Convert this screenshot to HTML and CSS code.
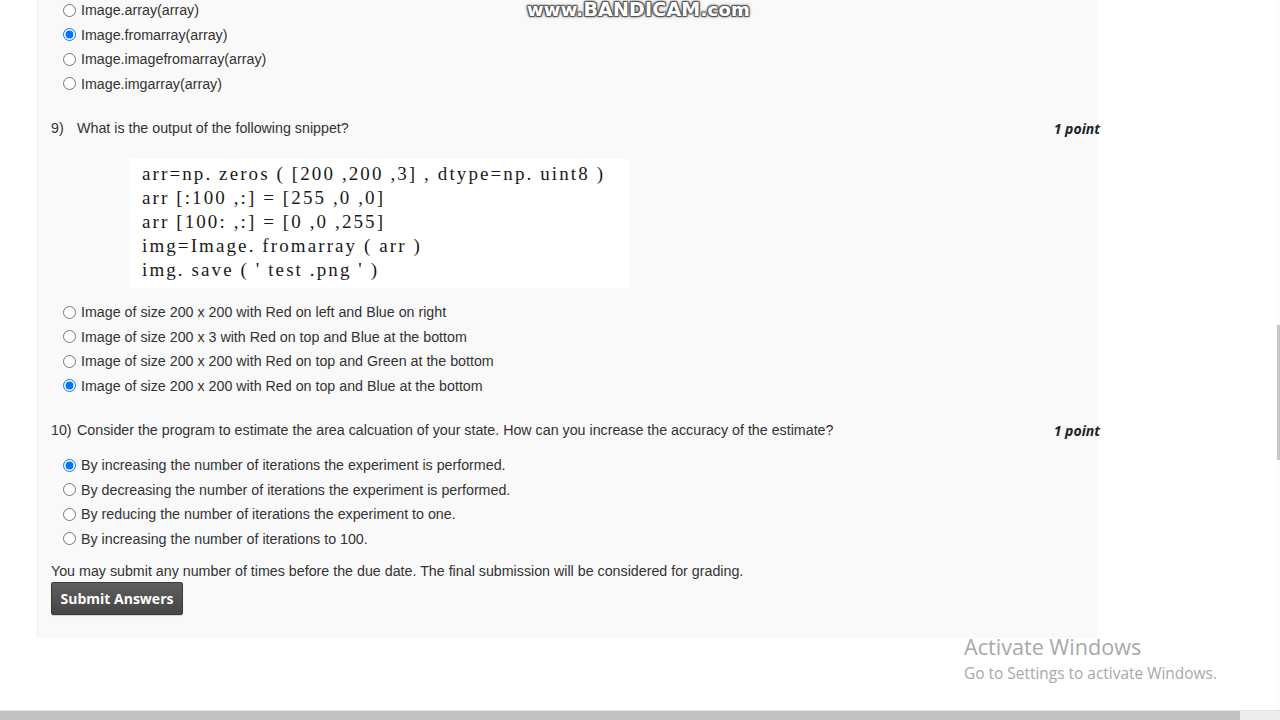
FILE: index.html
```html
<!DOCTYPE html>
<html>
<head>
<meta charset="utf-8">
<link rel="stylesheet" href="styles.css">
</head>
<body>
<div class="page">
  <div class="panel">
    <div class="opts first">
      <label class="opt"><input type="radio" name="q8"><span>Image.array(array)</span></label>
      <label class="opt"><input type="radio" name="q8" checked><span>Image.fromarray(array)</span></label>
      <label class="opt"><input type="radio" name="q8"><span>Image.imagefromarray(array)</span></label>
      <label class="opt"><input type="radio" name="q8"><span>Image.imgarray(array)</span></label>
    </div>

    <div class="q">
      <div class="qtext"><span class="qnum">9)</span><span>What is the output of the following snippet?</span></div>
      <div class="pts">1 point</div>
    </div>
    <div class="code">
      <div class="cl">arr=np. zeros ( [200 ,200 ,3] , dtype=np. uint8 )</div>
      <div class="cl">arr [:100 ,:] = [255 ,0 ,0]</div>
      <div class="cl">arr [100: ,:] = [0 ,0 ,255]</div>
      <div class="cl">img=Image. fromarray ( arr )</div>
      <div class="cl">img. save ( ' test .png ' )</div>
    </div>
    <div class="opts after-code">
      <label class="opt"><input type="radio" name="q9"><span>Image of size 200 x 200 with Red on left and Blue on right</span></label>
      <label class="opt"><input type="radio" name="q9"><span>Image of size 200 x 3 with Red on top and Blue at the bottom</span></label>
      <label class="opt"><input type="radio" name="q9"><span>Image of size 200 x 200 with Red on top and Green at the bottom</span></label>
      <label class="opt"><input type="radio" name="q9" checked><span>Image of size 200 x 200 with Red on top and Blue at the bottom</span></label>
    </div>

    <div class="q">
      <div class="qtext"><span class="qnum">10)</span><span>Consider the program to estimate the area calcuation of your state. How can you increase the accuracy of the estimate?</span></div>
      <div class="pts">1 point</div>
    </div>
    <div class="opts after-q">
      <label class="opt"><input type="radio" name="q10" checked><span>By increasing the number of iterations the experiment is performed.</span></label>
      <label class="opt"><input type="radio" name="q10"><span>By decreasing the number of iterations the experiment is performed.</span></label>
      <label class="opt"><input type="radio" name="q10"><span>By reducing the number of iterations the experiment to one.</span></label>
      <label class="opt"><input type="radio" name="q10"><span>By increasing the number of iterations to 100.</span></label>
    </div>

    <p class="note">You may submit any number of times before the due date. The final submission will be considered for grading.</p>
    <button class="submit" type="button">Submit Answers</button>
  </div>
</div>

<div class="bandicam"><span class="lc">www.</span>BANDICAM<span class="lc">.com</span></div>

<div class="activate">
  <div class="a1">Activate Windows</div>
  <div class="a2">Go to Settings to activate Windows.</div>
</div>

<div class="vscroll"><div class="vthumb"></div></div>
<div class="hscroll"><div class="hthumb"></div></div>
</body>
</html>
```

FILE: styles.css
```css
html, body {
  margin: 0;
  padding: 0;
  background: #ffffff;
  overflow: hidden;
  width: 1280px;
  height: 720px;
}

body {
  font-family: "Liberation Sans", Arial, sans-serif;
  font-size: 14.25px;
  color: #333333;
}

.page {
  padding-left: 37px;
}

.panel {
  width: 1046px;
  background: #f9f9f9;
  padding: 0 0 23px 13px;
  border-left: 1px solid #f1f1f1;
}

.opts {
  display: flex;
  flex-direction: column;
}

.opts.first { margin-top: -2px; }
.opts.after-code { margin-top: 12px; }
.opts.after-q { margin-top: 13px; }

.opt {
  height: 24.5px;
  display: flex;
  align-items: center;
  padding-left: 12px;
  white-space: nowrap;
}

.opt input {
  width: 13px;
  height: 13px;
  margin: 0 5px 0 0;
  accent-color: #0075ff;
}

.q {
  margin-top: 22px;
  height: 20px;
  display: flex;
  align-items: center;
  justify-content: space-between;
  margin-right: -3px;
}

.qtext {
  display: flex;
  white-space: nowrap;
}

.qnum {
  width: 26px;
}

.pts {
  font-family: "Open Sans", "Liberation Sans", sans-serif;
  font-weight: 700;
  font-style: italic;
  font-size: 14px;
  color: #222;
}

.code {
  margin: 21px 0 0 78px;
  width: 487px;
  height: 120px;
  padding: 3px 0 6px 13px;
  background: #ffffff;
  font-family: "Liberation Serif", "Times New Roman", serif;
  font-size: 19px;
  line-height: 24px;
  color: #1a1a1a;
}

.cl {
  white-space: pre;
  letter-spacing: 2.1px;
  height: 24px;
}

.note {
  margin: 10px 0 0 0;
  line-height: 20px;
}

.submit {
  display: block;
  margin-top: 1px;
  width: 132px;
  height: 33px;
  border: 1px solid #3c3c3c;
  border-radius: 2px;
  background: linear-gradient(#5e5e5e, #464646);
  color: #ffffff;
  font-family: "Open Sans", "Liberation Sans", sans-serif;
  font-weight: 700;
  font-size: 14px;
  padding: 0;
  box-shadow: 0 1px 1px rgba(0,0,0,0.15);
}

.bandicam {
  position: absolute;
  left: 527px;
  top: -2px;
  font-family: "DejaVu Sans", sans-serif;
  font-weight: 700;
  font-size: 19px;
  letter-spacing: 0.2px;
  color: #ffffff;
  text-shadow: 0 0 2px #555, 1px 1px 1px #555, -1px -1px 1px #555, 1px -1px 1px #555, -1px 1px 1px #555, 0 0 4px #888;
}

.bandicam .lc {
  font-size: 18px;
}

.activate {
  position: absolute;
  left: 964px;
  top: 633px;
  font-family: "Open Sans", "Noto Sans", sans-serif;
  color: #a8a8a8;
}

.a1 {
  font-size: 21.6px;
  line-height: 28px;
}

.a2 {
  font-size: 15.45px;
  line-height: 24px;
}

.vscroll {
  position: absolute;
  right: 0;
  top: 0;
  width: 4px;
  height: 711px;
  background: #fcfcfc;
}

.vthumb {
  position: absolute;
  left: 1px;
  top: 325px;
  width: 3px;
  height: 135px;
  background: #c6c6c6;
}

.hscroll {
  position: absolute;
  left: 0;
  bottom: 0;
  width: 1280px;
  height: 9px;
  background: #ededed;
  border-top: 1px solid #e4e4e4;
}

.hthumb {
  width: 1240px;
  height: 9px;
  background: #c1c1c1;
}
```
